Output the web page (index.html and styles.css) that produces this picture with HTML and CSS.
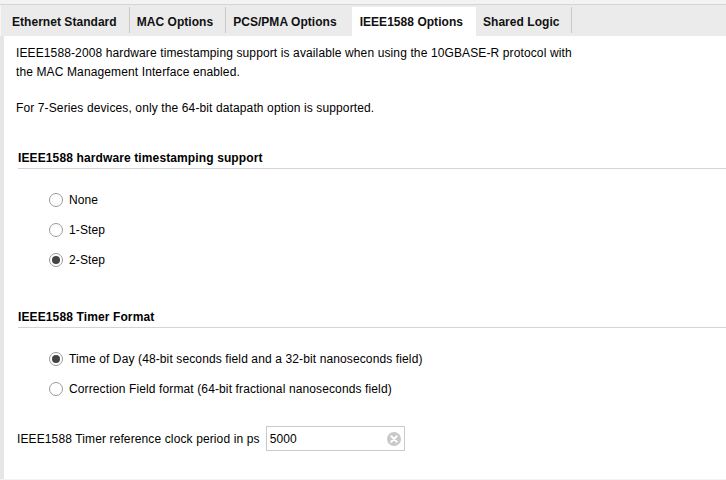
FILE: index.html
```html
<!DOCTYPE html>
<html lang="en">
<head>
    <meta charset="UTF-8">
    <title>IEEE1588 Options</title>
    <link rel="stylesheet" href="styles.css">
</head>
<body>
    <div class="window">
        <div class="tabs">
            <div class="tab">Ethernet Standard</div>
            <div class="tab">MAC Options</div>
            <div class="tab">PCS/PMA Options</div>
            <div class="tab active">IEEE1588 Options</div>
            <div class="tab">Shared Logic</div>
        </div>

        <div class="content">
            <p class="intro">IEEE1588-2008 hardware timestamping support is available when using the 10GBASE-R protocol with<br>the MAC Management Interface enabled.</p>
            <p class="note">For 7-Series devices, only the 64-bit datapath option is supported.</p>

            <h3 class="section-title">IEEE1588 hardware timestamping support</h3>
            <div class="radio-list">
                <label class="radio-row"><input type="radio" name="ts"> None</label>
                <label class="radio-row"><input type="radio" name="ts"> 1-Step</label>
                <label class="radio-row"><input type="radio" name="ts" checked> 2-Step</label>
            </div>

            <h3 class="section-title">IEEE1588 Timer Format</h3>
            <div class="radio-list">
                <label class="radio-row"><input type="radio" name="fmt" checked> Time of Day (48-bit seconds field and a 32-bit nanoseconds field)</label>
                <label class="radio-row"><input type="radio" name="fmt"> Correction Field format (64-bit fractional nanoseconds field)</label>
            </div>

            <div class="field">
                <label for="period">IEEE1588 Timer reference clock period in ps</label>
                <div class="input-box">
                    <input type="text" id="period" value="5000">
                    <span class="clear">
                        <svg width="14" height="14" viewBox="0 0 14 14">
                            <circle cx="7" cy="7" r="7" fill="#c8c8c8"/>
                            <path d="M4.3 4.3 L9.7 9.7 M9.7 4.3 L4.3 9.7" stroke="#fff" stroke-width="2" stroke-linecap="round"/>
                        </svg>
                    </span>
                </div>
            </div>
        </div>
    </div>
</body>
</html>
```

FILE: styles.css
```css
* {
    margin: 0;
    padding: 0;
    box-sizing: border-box;
}

body {
    font-family: "Liberation Sans", Arial, sans-serif;
    font-size: 12px;
    letter-spacing: 0.12px;
    color: #000;
    background: #f3f3f3;
    width: 726px;
    height: 480px;
    overflow: hidden;
}

.window {
    margin-top: 4px;
    border-top: 1px solid #d5d5d5;
    height: 475px;
    display: flex;
    flex-direction: column;
}

.tabs {
    display: flex;
    height: 31px;
    background: #ebebeb;
    padding-left: 4px;
    border-left: 1px solid #f7f7f7;
}

.tab {
    display: flex;
    align-items: center;
    margin-top: 2px;
    padding: 0 13px 0 7px;
    font-weight: bold;
    letter-spacing: 0.04px;
    color: #111;
    position: relative;
}

.tab::after {
    content: "";
    position: absolute;
    right: 0;
    top: 0;
    bottom: 3px;
    width: 1px;
    background: #c9c9c9;
}

.tab.active {
    background: #fff;
    padding-left: 8px;
}

.tab.active::after,
.tab:nth-child(3)::after {
    display: none;
}

.tab:nth-child(3) {
    padding-right: 15px;
}

.content {
    flex: 1;
    background: #fff;
    border-left: 4px solid #e6e6e6;
    padding: 8px 0 0 12px;
}

.intro {
    line-height: 19px;
}

.note {
    line-height: 19px;
    margin-top: 17px;
}

.section-title {
    font-size: 12px;
    font-weight: bold;
    line-height: 19px;
    margin: 31px 0 0 2px;
    border-bottom: 1px solid #d4d4d4;
}

.radio-list + .section-title {
    margin-top: 33px;
}

.radio-list {
    display: flex;
    flex-direction: column;
    padding: 16px 0 0 33px;
}

.radio-row {
    display: flex;
    align-items: center;
    gap: 6px;
    height: 30px;
}

.radio-row input {
    appearance: none;
    width: 14px;
    height: 14px;
    border: 1px solid #9a9a9a;
    border-radius: 50%;
    background: #fff;
    display: grid;
    place-items: center;
}

.radio-row input:checked::before {
    content: "";
    width: 8px;
    height: 8px;
    border-radius: 50%;
    background: #444;
}

.field {
    display: flex;
    align-items: center;
    gap: 6px;
    margin-top: 22px;
    padding-left: 1px;
}

.input-box {
    display: flex;
    align-items: center;
    width: 139px;
    height: 25px;
    border: 1px solid #cacaca;
    padding: 0 3px 0 3px;
}

.input-box input {
    flex: 1;
    min-width: 0;
    border: none;
    outline: none;
    font-family: inherit;
    font-size: 12px;
    letter-spacing: inherit;
    color: #000;
}

.clear {
    display: flex;
}
```
